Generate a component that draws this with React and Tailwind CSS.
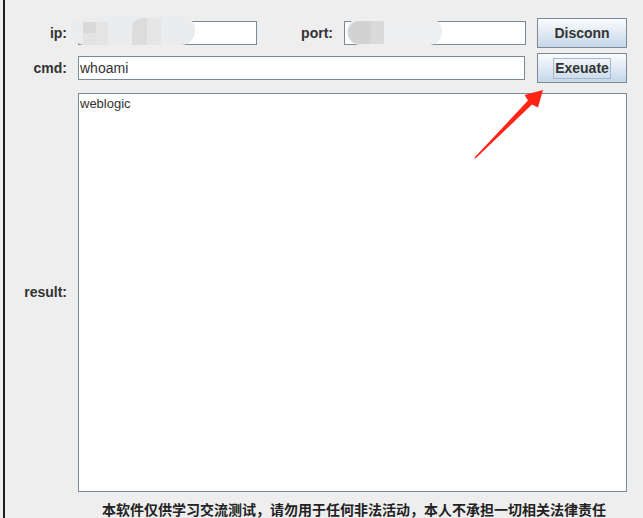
import React from "react";

const Label = ({ children, className = "" }) => (
  <div className={`text-right text-[14px] font-bold text-[#333] ${className}`}>{children}</div>
);

const Field = ({ value, className = "" }) => (
  <div className={`h-[24px] border border-[#7a8a99] bg-white px-[1px] text-[14px] leading-[22px] text-[#333] ${className}`}>
    {value}
  </div>
);

const Btn = ({ children, focused }) => (
  <button className="ml-[11px] flex h-[30px] w-[90px] items-center justify-center border border-[#7a8a99] bg-linear-to-b from-[#fbfcfe] to-[#c6d7e9] text-[14px] font-bold text-[#333]">
    <span className={focused ? "border border-[#a3b8cc] px-[1px] leading-[19px]" : "leading-[19px]"}>{children}</span>
  </button>
);

export default function App() {
  return (
    <div
      className="relative h-[518px] w-[643px] overflow-hidden bg-[#eeeeee]"
      style={{ fontFamily: '"Liberation Sans", Arial, "Noto Sans CJK SC", sans-serif' }}
    >
      {/* window left edge */}
      <div className="absolute left-[3px] top-0 h-full w-[2px] bg-[#1e1e1e]" />

      <div className="pt-[18px]">
        {/* row 1 */}
        <div className="flex h-[30px] items-center">
          <Label className="w-[67px]">ip:</Label>
          <Field className="ml-[11px] w-[179px]" value="" />
          <Label className="w-[76px]">port:</Label>
          <Field className="ml-[11px] w-[182px]" value="" />
          <Btn>Disconn</Btn>
        </div>

        {/* row 2 */}
        <div className="mt-[5px] flex h-[30px] items-center">
          <Label className="w-[67px]">cmd:</Label>
          <Field className="ml-[11px] w-[447px]" value="whoami" />
          <div className="ml-[1px]" />
          <Btn focused>Exeuate</Btn>
        </div>

        {/* result */}
        <div className="mt-[10px] flex items-center">
          <Label className="w-[67px]">result:</Label>
          <div className="ml-[11px] h-[399px] w-[549px] border border-[#7a8a99] bg-white px-[1px] pt-[2px] text-[13px] leading-[16px] text-[#333]">
            weblogic
          </div>
        </div>

        <div
          className="ml-[78px] mt-[8px] w-[552px] text-center text-[14px] font-bold leading-[18px] text-[#222]"
          style={{ fontFamily: '"Noto Sans CJK SC", sans-serif' }}
        >
          本软件仅供学习交流测试，请勿用于任何非法活动，本人不承担一切相关法律责任
        </div>
      </div>

      {/* redaction blur on ip */}
      <div className="pointer-events-none absolute left-[71px] top-[16px] h-[29px] w-[124px] rounded-[14px] bg-[#ebeced] blur-[0.6px]" />
      <div className="pointer-events-none absolute left-[83px] top-[22px] h-[11px] w-[13px] bg-[#d9d9d9]" />
      <div className="pointer-events-none absolute left-[83px] top-[33px] h-[12px] w-[13px] bg-[#e3e3e3]" />
      <div className="pointer-events-none absolute left-[96px] top-[22px] h-[23px] w-[12px] bg-[#e4e4e4]" />
      <div className="pointer-events-none absolute left-[132px] top-[18px] h-[27px] w-[15px] rounded-tl-[10px] bg-[#dcdcdc]" />
      <div className="pointer-events-none absolute left-[147px] top-[18px] h-[27px] w-[14px] bg-[#e6e6e6]" />

      {/* redaction blur on port */}
      <div className="pointer-events-none absolute left-[347px] top-[18px] h-[27px] w-[95px] rounded-[13px] bg-[#eeeff0] blur-[0.6px]" />
      <div className="pointer-events-none absolute left-[348px] top-[21px] h-[23px] w-[23px] rounded-l-[11px] bg-[#d2d2d2]" />
      <div className="pointer-events-none absolute left-[371px] top-[21px] h-[23px] w-[13px] bg-[#dadada]" />

      {/* red arrow annotation */}
      <svg className="pointer-events-none absolute left-0 top-0" width="643" height="518" viewBox="0 0 643 518">
        <polygon
          points="474.5,157.5 528,100.5 524.5,95 543,90 538,107.5 532,104.5 475.5,158.5"
          fill="#ff2416"
        />
      </svg>
    </div>
  );
}
